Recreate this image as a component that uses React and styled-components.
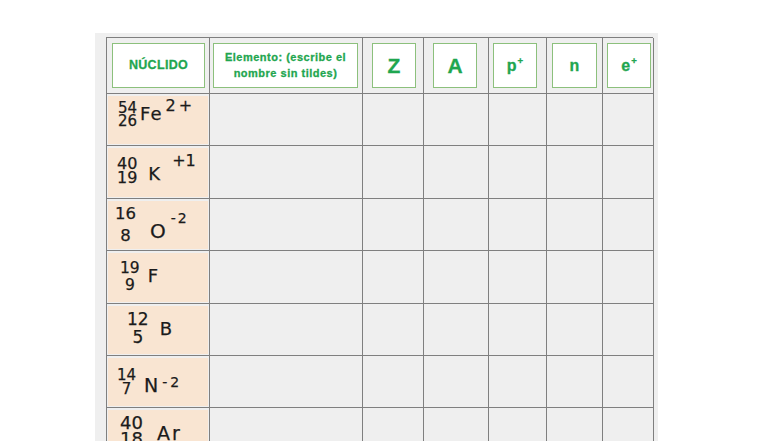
import React from 'react';
import styled, { createGlobalStyle } from 'styled-components';

const GlobalStyle = createGlobalStyle`
  html, body {
    margin: 0;
    padding: 0;
    background: #ffffff;
    overflow: hidden;
  }
`;

const Page = styled.div`
  width: 784px;
  height: 441px;
  overflow: hidden;
  padding: 33px 0 0 95px;
  box-sizing: border-box;
`;

const Sheet = styled.div`
  width: 563px;
  background: #efefef;
  padding: 4px 5px 20px 11px;
  box-sizing: border-box;
`;

const Grid = styled.div`
  display: grid;
  grid-template-columns: 103px 153px 61px 65px 58px 56px 51px;
  grid-template-rows: 56px;
  grid-auto-rows: 52.4px;
  border-top: 1px solid #7f7f7f;
  border-left: 1px solid #7f7f7f;
`;

const Cell = styled.div`
  border-right: 1px solid #7f7f7f;
  border-bottom: 1px solid #7f7f7f;
  box-sizing: border-box;
  display: flex;
  align-items: center;
  justify-content: flex-start;
  padding: ${p => p.$pad || '0'};
`;

const GreenBox = styled.div`
  width: ${p => p.$w}px;
  height: 45px;
  box-sizing: border-box;
  background: #ffffff;
  border: 1.5px solid #8cc07c;
  display: flex;
  align-items: center;
  justify-content: center;
  text-align: center;
  color: #1fa64f;
  font-family: "Liberation Sans", Arial, sans-serif;
  font-weight: 700;
  font-size: ${p => p.$size}px;
  line-height: ${p => p.$lh || 1.2};
  letter-spacing: ${p => p.$ls || 0}px;
  -webkit-text-stroke: 0.3px #1fa64f;
`;

const Sup = styled.sup`
  font-size: 0.6em;
  vertical-align: 0.75em;
  line-height: 0;
  margin-left: 1px;
`;

const Peach = styled.div`
  width: 100%;
  height: 100%;
  background: #f9e5d2;
  display: flex;
  align-items: flex-start;
  line-height: 1;
  color: #1b1b1b;
  font-family: "DejaVu Sans", "Liberation Sans", sans-serif;
  -webkit-text-stroke: 0.25px #1b1b1b;
`;

const Stack = styled.div`
  display: flex;
  flex-direction: column;
  align-items: ${p => (p.$center ? 'center' : 'flex-start')};
  font-size: ${p => p.$s}px;
  line-height: ${p => p.$lh}px;
  margin: ${p => p.$mt}px 0 0 ${p => p.$ml}px;
`;

const Glyphs = styled.span`
  font-size: ${p => p.$s}px;
  margin: ${p => p.$mt}px 0 0 ${p => p.$gap}px;
  letter-spacing: ${p => p.$ls || 0}px;
`;

const headers = [
  { w: 93, text: 'NÚCLIDO', size: 12.5, ls: 0.3, pad: '0 0 0 5px' },
  { w: 145, text: ['Elemento: (escribe el', 'nombre sin tildes)'], size: 11, lh: 1.45, ls: 0.5, pad: '0 0 0 3px' },
  { w: 44, text: 'Z', size: 21, pad: '0 0 0 9px' },
  { w: 44, text: 'A', size: 21, pad: '0 0 0 9px' },
  { w: 44, text: 'p', sup: '+', size: 16, pad: '0 0 0 4px' },
  { w: 45, text: 'n', size: 16, pad: '0 0 0 5px' },
  { w: 44, text: 'e', sup: '+', size: 16, pad: '0 0 0 4px' },
];

const nuclides = [
  {
    mass: '54', z: '26',
    stack: { s: 15, lh: 13, mt: 6.3, ml: 10 },
    sym: { t: 'Fe', s: 18, mt: 9, gap: 3, ls: 1 },
    charge: { t: '2+', s: 16, mt: 2, gap: 3, ls: 3 },
  },
  {
    mass: '40', z: '19',
    stack: { s: 16, lh: 14, mt: 8.6, ml: 9 },
    sym: { t: 'K', s: 18, mt: 17, gap: 11 },
    charge: { t: '+1', s: 16, mt: 4.6, gap: 12 },
  },
  {
    mass: '16', z: '8', center: true,
    stack: { s: 16.5, lh: 22, mt: 2.3, ml: 7 },
    sym: { t: 'O', s: 20, mt: 20.5, gap: 14 },
    charge: { t: '-2', s: 14, mt: 10, gap: 5, ls: 2 },
  },
  {
    mass: '19', z: '9', center: true,
    stack: { s: 15.5, lh: 17, mt: 7, ml: 12 },
    sym: { t: 'F', s: 18, mt: 13.4, gap: 8 },
  },
  {
    mass: '12', z: '5', center: true,
    stack: { s: 17, lh: 17.5, mt: 5.5, ml: 19 },
    sym: { t: 'B', s: 18, mt: 14, gap: 11 },
  },
  {
    mass: '14', z: '7', center: true,
    stack: { s: 15, lh: 14, mt: 10.3, ml: 9 },
    sym: { t: 'N', s: 19, mt: 18.3, gap: 8 },
    charge: { t: '-2', s: 14, mt: 17.5, gap: 4, ls: 3 },
  },
  {
    mass: '40', z: '18',
    stack: { s: 18, lh: 16, mt: 4.9, ml: 12 },
    sym: { t: 'Ar', s: 19, mt: 13.5, gap: 14, ls: 2 },
  },
];

const Nuclide = ({ n }) => (
  <Peach>
    <Stack $s={n.stack.s} $lh={n.stack.lh} $mt={n.stack.mt} $ml={n.stack.ml} $center={n.center}>
      <span>{n.mass}</span>
      <span>{n.z}</span>
    </Stack>
    <Glyphs $s={n.sym.s} $mt={n.sym.mt} $gap={n.sym.gap} $ls={n.sym.ls}>{n.sym.t}</Glyphs>
    {n.charge && (
      <Glyphs $s={n.charge.s} $mt={n.charge.mt} $gap={n.charge.gap} $ls={n.charge.ls}>{n.charge.t}</Glyphs>
    )}
  </Peach>
);

const App = () => (
  <>
    <GlobalStyle />
    <Page>
      <Sheet>
        <Grid>
          {headers.map((h, i) => (
            <Cell key={i} $pad={h.pad}>
              <GreenBox $w={h.w} $size={h.size} $lh={h.lh} $ls={h.ls}>
                {Array.isArray(h.text) ? (
                  <span>{h.text[0]}<br />{h.text[1]}</span>
                ) : (
                  <span>{h.text}{h.sup && <Sup>{h.sup}</Sup>}</span>
                )}
              </GreenBox>
            </Cell>
          ))}
          {nuclides.map((n, r) => (
            <React.Fragment key={r}>
              <Cell $pad="2px 1px 1px 1px">
                <Nuclide n={n} />
              </Cell>
              {[0, 1, 2, 3, 4, 5].map(c => <Cell key={c} />)}
            </React.Fragment>
          ))}
        </Grid>
      </Sheet>
    </Page>
  </>
);

export default App;
